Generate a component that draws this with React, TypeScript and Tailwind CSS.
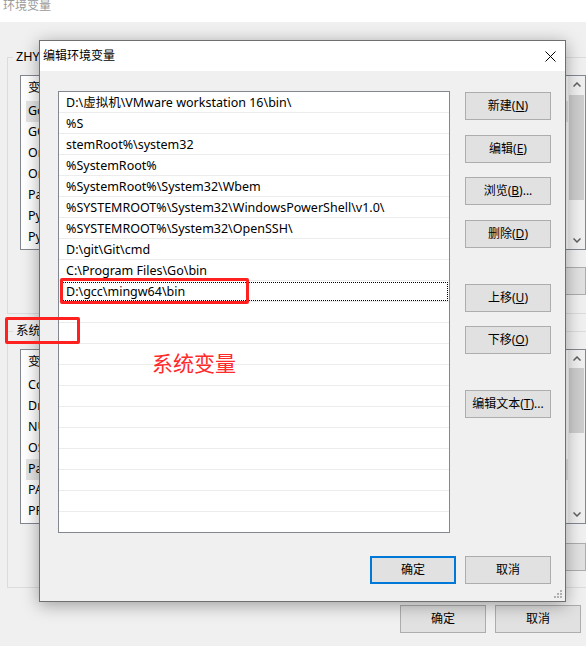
import React from "react";

const rows = [
  "D:\\虚拟机\\VMware workstation 16\\bin\\",
  "%S",
  "stemRoot%\\system32",
  "%SystemRoot%",
  "%SystemRoot%\\System32\\Wbem",
  "%SYSTEMROOT%\\System32\\WindowsPowerShell\\v1.0\\",
  "%SYSTEMROOT%\\System32\\OpenSSH\\",
  "D:\\git\\Git\\cmd",
  "C:\\Program Files\\Go\\bin",
];

function Btn({
  children,
  className = "",
  primary = false,
}: {
  children: React.ReactNode;
  className?: string;
  primary?: boolean;
}) {
  return (
    <div
      className={`h-[28px] w-[86px] flex items-center justify-center bg-[#e1e1e1] text-[12px] text-black ${
        primary ? "border-2 border-[#0078d7]" : "border border-[#adadad]"
      } ${className}`}
    >
      {children}
    </div>
  );
}

function Chevron({ up }: { up: boolean }) {
  return (
    <svg width="8" height="5" viewBox="0 0 8 5">
      <polyline
        points={up ? "0.5,4.5 4,1 7.5,4.5" : "0.5,0.5 4,4 7.5,0.5"}
        fill="none"
        stroke="#606060"
        strokeWidth="1.5"
      />
    </svg>
  );
}

function Scrollbar({ thumbTop, thumbH }: { thumbTop: number; thumbH: number }) {
  return (
    <div className="w-[17px] h-full flex flex-col bg-[#f0f0f0]">
      <div className="h-[17px] flex items-center justify-center">
        <Chevron up />
      </div>
      <div className="flex-1 px-[1px]">
        <div className="bg-[#cdcdcd]" style={{ marginTop: thumbTop, height: thumbH }} />
      </div>
      <div className="h-[17px] flex items-center justify-center">
        <Chevron up={false} />
      </div>
    </div>
  );
}

function BgList({
  items,
  sel,
  thumbTop,
  thumbH,
}: {
  items: string[];
  sel: number;
  thumbTop: number;
  thumbH: number;
}) {
  return (
    <div className="w-[566px] h-[175px] border border-[#828790] bg-white flex">
      <div className="flex-1 flex flex-col text-[12.5px] text-black">
        <div className="h-[25px] flex items-center pl-[7px]">变量</div>
        {items.map((t, i) => (
          <div
            key={i}
            className={`h-[21px] flex items-center pl-[7px] ml-[5px] ${
              i === sel ? "bg-[#e5e5e5]" : ""
            }`}
          >
            <span className="-ml-[5px]">{t}</span>
          </div>
        ))}
      </div>
      <Scrollbar thumbTop={thumbTop} thumbH={thumbH} />
    </div>
  );
}

export default function App() {
  return (
    <div className="relative w-[586px] h-[646px] overflow-hidden bg-[#f0f0f0] font-['Noto_Sans','Noto_Sans_CJK_SC',sans-serif]">
      {/* background window title */}
      <div className="h-[22px] bg-white text-[12px] leading-[12px] text-[#9a9a9a] pl-[3px]">
        环境变量
      </div>

      {/* background window body */}
      <div className="pl-[7px] flex flex-col">
        {/* user variables group */}
        <div className="relative mt-[35px] w-[600px] h-[257px] border border-[#dcdcdc] pl-[12px] pt-[17px]">
          <span className="absolute -top-[10px] left-[5px] px-[3px] bg-[#f0f0f0] text-[12.5px] text-black">
            ZHY 的用户变量(U)
          </span>
          <BgList
            items={["GoLand", "GOPATH", "OneDrive", "OneDriveConsumer", "Path", "PyCharm", "PyCharm Community"]}
            sel={0}
            thumbTop={2}
            thumbH={105}
          />
          <div className="w-[566px] flex justify-end gap-[10px] mt-[17px]">
            <Btn>新建(N)...</Btn>
            <Btn>编辑(E)...</Btn>
            <Btn>删除(D)</Btn>
          </div>
        </div>

        {/* system variables group */}
        <div className="relative mt-[17px] w-[600px] h-[257px] border border-[#dcdcdc] pl-[12px] pt-[17px]">
          <span className="absolute -top-[10px] left-[5px] px-[3px] bg-[#f0f0f0] text-[12.5px] text-black">
            系统变量(S)
          </span>
          <BgList
            items={["ComSpec", "DriverData", "NUMBER_OF_PROCESSORS", "OS", "Path", "PATHEXT", "PROCESSOR_ARCHITECTURE"]}
            sel={4}
            thumbTop={1}
            thumbH={65}
          />
          <div className="w-[566px] flex justify-end gap-[10px] mt-[19px]">
            <Btn>新建(W)...</Btn>
            <Btn>编辑(I)...</Btn>
            <Btn>删除(L)</Btn>
          </div>
        </div>

        <div className="w-[574px] flex justify-end gap-[9px] mt-[17px]">
          <Btn>确定</Btn>
          <Btn>取消</Btn>
        </div>
      </div>

      {/* edit dialog */}
      <div className="absolute left-[39px] top-[40px] w-[527px] h-[562px] border border-[#6f6f6f] bg-[#f0f0f0] flex flex-col shadow-[0_3px_16px_rgba(0,0,0,0.35)]">
        <div className="h-[30px] bg-white flex items-center justify-between pl-[3px] pr-[9px] shrink-0">
          <span className="text-[12px] text-black">编辑环境变量</span>
          <svg width="11" height="11" viewBox="0 0 11 11">
            <path d="M0.5 0.5 L10.5 10.5 M10.5 0.5 L0.5 10.5" stroke="#000" strokeWidth="1" />
          </svg>
        </div>
        <div className="flex-1 flex flex-col pt-[20px] pl-[18px] pr-[14px]">
          <div className="flex">
            <div className="w-[392px] h-[442px] border border-[#828790] bg-white flex flex-col text-[12.5px] text-black overflow-hidden">
              {rows.map((r, i) => (
                <div
                  key={i}
                  className="h-[21px] shrink-0 border-b border-[#ececec] flex items-center pl-[7px] pt-[3px] whitespace-nowrap"
                >
                  {r}
                </div>
              ))}
              <div className="h-[21px] shrink-0 border-b border-[#ececec] pl-[3px] pr-[1px] pt-[1px]">
                <div className="h-full border border-dotted border-black flex items-center pl-[3px] pt-[2px]">
                  D:\gcc\mingw64\bin
                </div>
              </div>
              {Array.from({ length: 11 }).map((_, i) => (
                <div key={`e${i}`} className="h-[21px] shrink-0 border-b border-[#ececec]" />
              ))}
            </div>
            <div className="ml-[15px] flex flex-col pt-[1px]">
              <Btn>
                新建(<span className="underline">N</span>)
              </Btn>
              <Btn className="mt-[15px]">
                编辑(<span className="underline">E</span>)
              </Btn>
              <Btn className="mt-[14px]">
                浏览(<span className="underline">B</span>)...
              </Btn>
              <Btn className="mt-[15px]">
                删除(<span className="underline">D</span>)
              </Btn>
              <Btn className="mt-[36px]">
                上移(<span className="underline">U</span>)
              </Btn>
              <Btn className="mt-[14px]">
                下移(<span className="underline">O</span>)
              </Btn>
              <Btn className="mt-[36px]">
                编辑文本(<span className="underline">T</span>)...
              </Btn>
            </div>
          </div>
          <div className="flex justify-end mt-[23px]">
            <Btn primary>确定</Btn>
            <Btn className="ml-[9px]">取消</Btn>
          </div>
        </div>
        {/* resize grip */}
        <svg className="absolute right-[3px] bottom-[3px]" width="8" height="8" viewBox="0 0 8 8">
          <rect x="6" y="0" width="2" height="2" fill="#b0b0b0" />
          <rect x="3" y="3" width="2" height="2" fill="#b0b0b0" />
          <rect x="6" y="3" width="2" height="2" fill="#b0b0b0" />
          <rect x="0" y="6" width="2" height="2" fill="#b0b0b0" />
          <rect x="3" y="6" width="2" height="2" fill="#b0b0b0" />
          <rect x="6" y="6" width="2" height="2" fill="#b0b0b0" />
        </svg>
      </div>

      {/* red annotations */}
      <div className="absolute left-[60px] top-[278px] w-[189px] h-[26px] border-[3px] border-[#ff2020] rounded-[2px]" />
      <div className="absolute left-[5px] top-[317px] w-[75px] h-[27px] border-[3px] border-[#ff2020] rounded-[2px]" />
      <div className="absolute left-[152px] top-[350px] text-[21px] leading-[26px] text-[#ff2a2a]">
        系统变量
      </div>
    </div>
  );
}
